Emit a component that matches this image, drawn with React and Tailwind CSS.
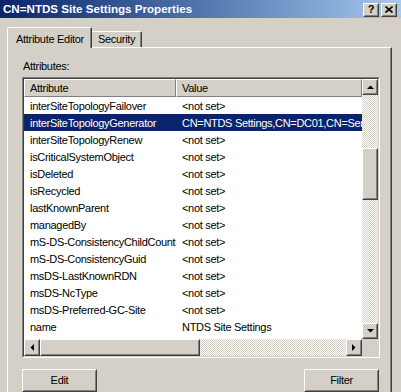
import React from 'react';

const rows = [
  ['interSiteTopologyFailover', '<not set>'],
  ['interSiteTopologyGenerator', 'CN=NTDS Settings,CN=DC01,CN=Servers,CN=Default-First-Site-Name'],
  ['interSiteTopologyRenew', '<not set>'],
  ['isCriticalSystemObject', '<not set>'],
  ['isDeleted', '<not set>'],
  ['isRecycled', '<not set>'],
  ['lastKnownParent', '<not set>'],
  ['managedBy', '<not set>'],
  ['mS-DS-ConsistencyChildCount', '<not set>'],
  ['mS-DS-ConsistencyGuid', '<not set>'],
  ['msDS-LastKnownRDN', '<not set>'],
  ['msDS-NcType', '<not set>'],
  ['msDS-Preferred-GC-Site', '<not set>'],
  ['name', 'NTDS Site Settings'],
  ['objectCategory', ''],
];

// classic raised 3D edge
const Raised = ({ className = '', children }) => (
  <div className={`border border-t-white border-l-white border-b-[#404040] border-r-[#404040] bg-[#d4d0c8] ${className}`}>
    <div className="w-full h-full border border-t-[#d4d0c8] border-l-[#d4d0c8] border-b-[#808080] border-r-[#808080] flex items-center justify-center">
      {children}
    </div>
  </div>
);

const Arrow = ({ dir }) => {
  const pts = {
    up: '0,4 7,4 3.5,0.5',
    down: '0,0 7,0 3.5,3.5',
    left: '4,0 4,7 0.5,3.5',
    right: '0,0 0,7 3.5,3.5',
  }[dir];
  const vertical = dir === 'up' || dir === 'down';
  return (
    <svg width={vertical ? 7 : 4} height={vertical ? 4 : 7} viewBox={vertical ? '0 0 7 4' : '0 0 4 7'}>
      <polygon points={pts} fill="#000" />
    </svg>
  );
};

const track = '[background:repeating-conic-gradient(#d4d0c8_0_25%,#ffffff_0_50%)_0_0/2px_2px]';

export default function App() {
  return (
    <div
      className="w-[401px] h-[392px] overflow-hidden bg-[#d4d0c8] text-[11px] text-black tracking-[-0.3px]"
      style={{ fontFamily: '"Liberation Sans", Arial, sans-serif' }}
    >
      {/* Title bar */}
      <div className="h-[18px] flex items-center justify-between pl-[3px] pr-[4px] bg-gradient-to-r from-[#0a246a] to-[#a6caf0]">
        <span className="text-white font-bold text-[11.6px] tracking-normal leading-none">CN=NTDS Site Settings Properties</span>
        <div className="flex gap-[2px] pt-[1px]">
          <Raised className="w-[16px] h-[14px]">
            <span className="font-bold text-[11px] leading-none tracking-normal">?</span>
          </Raised>
          <Raised className="w-[16px] h-[14px]">
            <svg width="8" height="7" viewBox="0 0 8 7">
              <path d="M0.5 0.5 L7.5 6.5 M7.5 0.5 L0.5 6.5" stroke="#000" strokeWidth="1.6" />
            </svg>
          </Raised>
        </div>
      </div>

      {/* Tabs */}
      <div className="flex items-end pl-[7px] pt-[9px]">
        <div className="relative z-10 mb-[-1px] h-[21px] pl-[8px] pr-[7px] flex items-start pt-[3px] bg-[#d4d0c8] border-t border-l border-white border-r border-r-[#404040] rounded-tl-[2px] shadow-[inset_-1px_0_#808080]">
          Attribute Editor
        </div>
        <div className="h-[16px] px-[6px] flex items-center ml-[-1px] border-t border-l border-white border-r border-r-[#404040] rounded-tr-[2px] shadow-[inset_-1px_0_#808080]">
          Security
        </div>
      </div>

      {/* Tab panel */}
      <div className="ml-[7px] w-[385px] h-[400px] border-t border-l border-white border-r border-r-[#404040] shadow-[inset_-1px_0_#808080] pl-[14px] pt-[12px]">
        <div className="leading-[13px] ml-[1px]">Attributes:</div>

        {/* List view */}
        <div className="mt-[4px] w-[358px] h-[281px] border border-t-[#808080] border-l-[#808080] border-b-white border-r-white">
          <div className="w-full h-full border border-t-[#404040] border-l-[#404040] border-b-[#d4d0c8] border-r-[#d4d0c8] bg-white flex">
            <div className="w-[338px] flex flex-col">
              {/* header */}
              <div className="h-[18px] flex shrink-0">
                <div className="w-[152px] border border-t-white border-l-white border-b-[#808080] border-r-[#808080] bg-[#d4d0c8] pl-[5px] flex items-center">
                  Attribute
                </div>
                <div className="flex-1 border border-t-white border-l-white border-b-[#808080] border-r-[#808080] bg-[#d4d0c8] pl-[5px] flex items-center">
                  Value
                </div>
              </div>
              {/* rows */}
              <div className="h-[242px] overflow-hidden">
                {rows.map(([attr, val], i) => {
                  const sel = i === 1;
                  return (
                    <div
                      key={attr}
                      className={`h-[17px] pt-[1px] flex items-center whitespace-nowrap overflow-hidden ${sel ? 'bg-[#0a246a] text-white' : ''}`}
                    >
                      <div className="w-[152px] shrink-0 pl-[6px] overflow-hidden">{attr}</div>
                      <div className="pl-[6px]">{val}</div>
                    </div>
                  );
                })}
              </div>
              {/* horizontal scrollbar */}
              <div className="h-[17px] flex shrink-0">
                <Raised className="w-[16px] h-[17px] shrink-0">
                  <Arrow dir="left" />
                </Raised>
                <Raised className="w-[160px] h-[17px] shrink-0" />
                <div className={`flex-1 ${track}`} />
                <Raised className="w-[16px] h-[17px] shrink-0">
                  <Arrow dir="right" />
                </Raised>
              </div>
            </div>

            {/* vertical scrollbar */}
            <div className="w-[16px] flex flex-col">
              <Raised className="w-[16px] h-[16px] shrink-0">
                <Arrow dir="up" />
              </Raised>
              <div className={`h-[53px] ${track}`} />
              <Raised className="w-[16px] h-[52px] shrink-0" />
              <div className={`flex-1 ${track}`} />
              <Raised className="w-[16px] h-[16px] shrink-0">
                <Arrow dir="down" />
              </Raised>
              <div className="h-[17px] bg-[#d4d0c8] shrink-0" />
            </div>
          </div>
        </div>

        {/* Buttons */}
        <div className="mt-[11px] w-[357px] flex justify-between">
          <Raised className="w-[75px] h-[23px]">Edit</Raised>
          <Raised className="w-[75px] h-[23px]">Filter</Raised>
        </div>
      </div>
    </div>
  );
}
